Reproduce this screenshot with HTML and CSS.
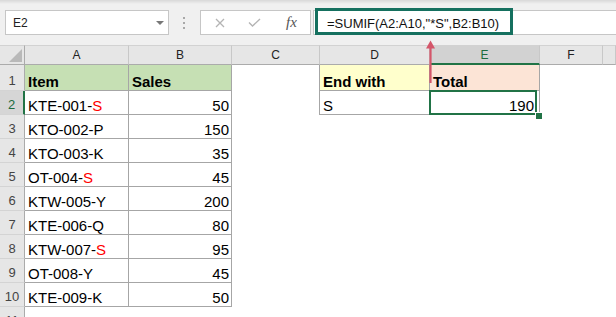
FILE: index.html
```html
<!DOCTYPE html>
<html lang="en">
  <head>
    <meta charset="UTF-8" />
    <meta name="viewport" content="width=device-width, initial-scale=1.0" />
    <title>SUMIF ends with</title>
    <link rel="stylesheet" href="styles.css">
  </head>
  <body>
    <div class="app">
      <div class="toolbar">
        <div class="namebox"><span>E2</span><i class="caret"></i></div>
        <div class="grip"><i></i><i></i><i></i></div>
        <div class="fxbox">
          <svg class="ico-x" width="10" height="10" viewBox="0 0 10 10"><path d="M1 1L9 9M9 1L1 9" stroke="#b4b4b4" stroke-width="1.3" fill="none"/></svg>
          <svg class="ico-ok" width="13" height="9" viewBox="0 0 13 9"><path d="M1 4.5L4.5 8L12 1" stroke="#b4b4b4" stroke-width="1.4" fill="none"/></svg>
          <span class="fx">fx</span>
        </div>
        <div class="formula">
          <span class="hl">=SUMIF(A2:A10,"*S",B2:B10)</span>
        </div>
      </div>

      <div class="sheet">
        <div class="row head">
          <div class="corner"><i></i></div>
          <div class="ch">A</div>
          <div class="ch">B</div>
          <div class="ch">C</div>
          <div class="ch">D</div>
          <div class="ch on">E</div>
          <div class="ch">F</div>
          <div class="ch"></div>
        </div>
        <div class="row first">
          <div class="rh">1</div>
          <div class="c t green b">Item</div>
          <div class="c t green b">Sales</div>
          <div class="c edge"></div>
          <div class="c t yellow b">End with</div>
          <div class="c t peach b">Total</div>
          <div class="c"></div>
          <div class="c"></div>
        </div>
        <div class="row">
          <div class="rh on">2</div>
          <div class="c t">KTE-001-<span class="red">S</span></div>
          <div class="c t num">50</div>
          <div class="c edge"></div>
          <div class="c t">S</div>
          <div class="c t num sel">190</div>
          <div class="c"></div>
          <div class="c"></div>
        </div>
        <div class="row">
          <div class="rh">3</div>
          <div class="c t">KTO-002-P</div>
          <div class="c t num">150</div>
        </div>
        <div class="row">
          <div class="rh">4</div>
          <div class="c t">KTO-003-K</div>
          <div class="c t num">35</div>
        </div>
        <div class="row">
          <div class="rh">5</div>
          <div class="c t">OT-004-<span class="red">S</span></div>
          <div class="c t num">45</div>
        </div>
        <div class="row">
          <div class="rh">6</div>
          <div class="c t">KTW-005-Y</div>
          <div class="c t num">200</div>
        </div>
        <div class="row">
          <div class="rh">7</div>
          <div class="c t">KTE-006-Q</div>
          <div class="c t num">80</div>
        </div>
        <div class="row">
          <div class="rh">8</div>
          <div class="c t">KTW-007-<span class="red">S</span></div>
          <div class="c t num">95</div>
        </div>
        <div class="row">
          <div class="rh">9</div>
          <div class="c t">OT-008-Y</div>
          <div class="c t num">45</div>
        </div>
        <div class="row">
          <div class="rh">10</div>
          <div class="c t">KTE-009-K</div>
          <div class="c t num">50</div>
        </div>
        <div class="row">
          <div class="rh">11</div>
        </div>
      </div>

      <svg class="arrow" width="13" height="47" viewBox="0 0 13 47">
        <path d="M6.5 9V45" stroke="#d4566a" stroke-width="2.2"/>
        <polygon points="6.5,2.5 2,10.5 11,10.5" fill="#d4566a"/>
      </svg>
    </div>
  </body>
</html>
```

FILE: styles.css
```css
body {
  margin: 0;
  background: #fff;
  font-family: "Liberation Sans", Arial, sans-serif;
  overflow: hidden;
}

.app {
  position: relative;
  width: 616px;
  height: 317px;
  overflow: hidden;
}

/* formula bar */
.toolbar {
  display: flex;
  align-items: flex-start;
  height: 45px;
  box-sizing: border-box;
  padding-top: 10px;
  background: linear-gradient(#d8d8d8, #f0f0f0 4px);
}
.namebox {
  display: flex;
  align-items: center;
  justify-content: space-between;
  box-sizing: border-box;
  width: 164px;
  height: 25px;
  margin-left: 5px;
  padding: 1px 4px 0 7px;
  background: #fff;
  border: 1px solid #c6c6c6;
  font-size: 12px;
  color: #222;
}
.caret {
  border-left: 4px solid transparent;
  border-right: 4px solid transparent;
  border-top: 4px solid #777;
}
.grip {
  display: flex;
  flex-direction: column;
  gap: 3px;
  margin: 7px 15px 0 14px;
}
.grip i {
  width: 2px;
  height: 2px;
  background: #a8a8a8;
}
.fxbox {
  display: flex;
  align-items: center;
  box-sizing: border-box;
  width: 111px;
  height: 25px;
  background: #fff;
  border: 1px solid #c6c6c6;
}
.ico-x {
  margin-left: 14px;
}
.ico-ok {
  margin-left: 23px;
}
.fx {
  margin-left: 25px;
  font-family: "Liberation Serif", serif;
  font-style: italic;
  font-size: 15px;
  color: #555;
}
.formula {
  position: relative;
  flex: 1;
  height: 25px;
  margin-left: 2px;
  box-sizing: border-box;
  background: #fff;
  border: 1px solid #c6c6c6;
  border-right: 0;
}
.hl {
  position: absolute;
  left: 1px;
  top: -3px;
  width: 198px;
  height: 27px;
  box-sizing: border-box;
  padding: 3px 0 0 9px;
  border: 3px solid #15705f;
  font-size: 13px;
  line-height: 19px;
  color: #111;
}

/* grid */
.row {
  display: grid;
  grid-template-columns: 25px 104px 103px 88px 110px 110px 63px 13px;
  height: 24px;
}
.row.first {
  height: 26px;
}
.row.head {
  height: 20px;
}
.row > div {
  box-sizing: border-box;
  display: flex;
  align-items: flex-end;
  overflow: hidden;
  white-space: nowrap;
}
.corner,
.ch {
  background: #e6e6e6;
  border-top: 1px solid #d2d2d2;
  border-bottom: 1px solid #ababab;
  border-right: 1px solid #c8c8c8;
}
.row .ch {
  align-items: center;
  justify-content: center;
  font-size: 12px;
  color: #222;
}
.row .ch.on {
  background: #d2d2d2;
  color: #1d6b3e;
  border-bottom: 2px solid #217346;
}
.row .corner {
  justify-content: flex-end;
  padding: 0 2px 2px 0;
  border-right-color: #ababab;
}
.corner i {
  width: 0;
  height: 0;
  border-left: 13px solid transparent;
  border-bottom: 13px solid #b9b9b9;
}
.row .rh {
  justify-content: center;
  padding-bottom: 2px;
  background: #e6e6e6;
  border-right: 1px solid #ababab;
  border-bottom: 1px solid #d4d4d4;
  font-size: 13px;
  color: #444;
}
.row .rh.on {
  background: #d6d6d6;
  color: #1d6b3e;
  border-right: 2px solid #217346;
}
.c {
  padding: 0 3px;
  font-size: 15px;
  line-height: 17px;
  color: #000;
}
.t {
  border-right: 1px solid #a6a6a6;
  border-bottom: 1px solid #a6a6a6;
}
.edge {
  border-right: 1px solid #a6a6a6;
}
.row .num {
  justify-content: flex-end;
  padding-right: 2px;
}
.b {
  font-weight: bold;
}
.green {
  background: #c6e0b4;
}
.yellow {
  background: #ffffcc;
}
.peach {
  background: #fce4d6;
}
.red {
  color: #ff0000;
}
.row .sel {
  position: relative;
  overflow: visible;
  padding-right: 5px;
}
.sel::after {
  content: "";
  position: absolute;
  left: -1px;
  top: -1px;
  right: 2px;
  bottom: -1px;
  border: 2px solid #217346;
}
.sel::before {
  content: "";
  position: absolute;
  left: 105px;
  top: 21px;
  width: 6px;
  height: 6px;
  background: #217346;
  border: 1px solid #fff;
  z-index: 1;
}

.arrow {
  position: absolute;
  left: 424px;
  top: 38px;
}
```
